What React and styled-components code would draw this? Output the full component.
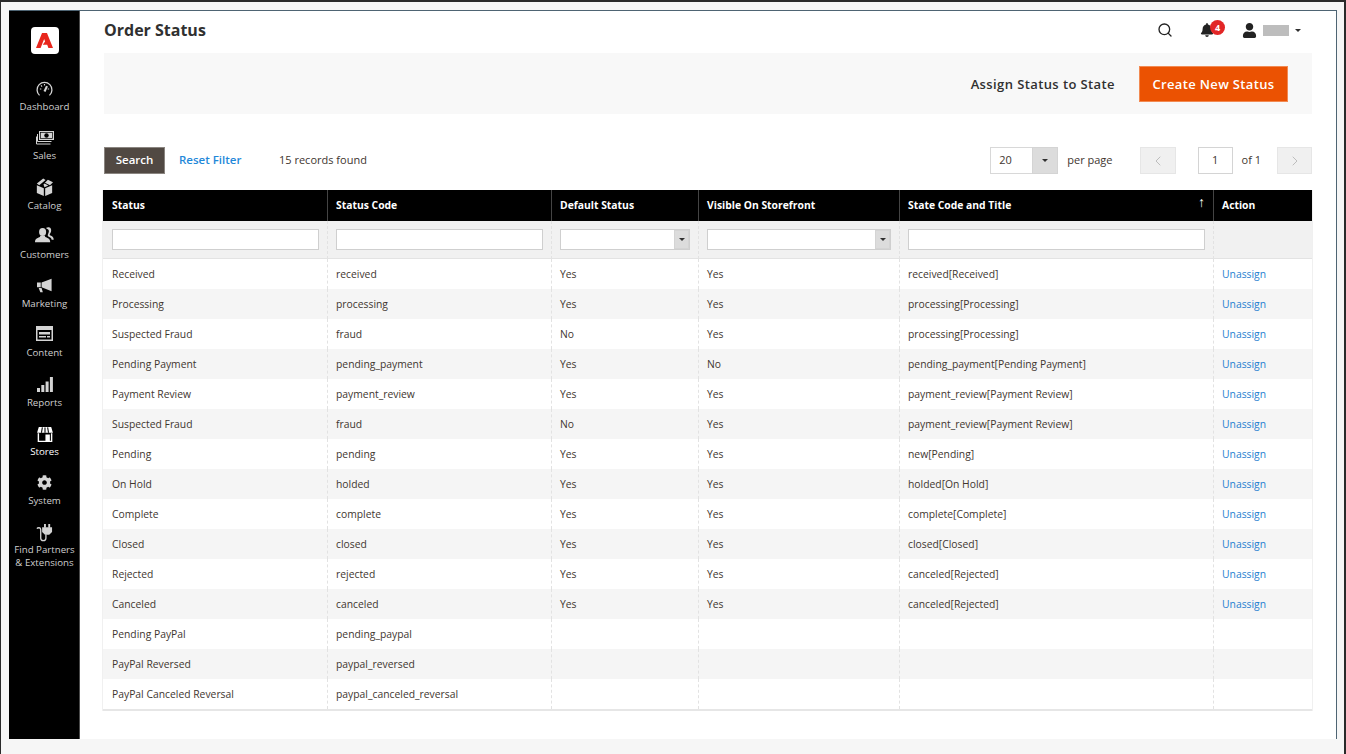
import React from "react";
import styled, { createGlobalStyle } from "styled-components";
import { Search as SearchIcon, ChevronLeft, ChevronRight } from "lucide-react";
import { FaBell, FaCog, FaUser } from "react-icons/fa";

const GlobalStyle = createGlobalStyle`
    html, body {
        margin: 0;
        padding: 0;
        height: 754px;
        overflow: hidden;
        background: #f6f6f6;
        font-family: "Open Sans", "Liberation Sans", sans-serif;
        color: #41362f;
    }
    * {
        box-sizing: border-box;
    }
`;

const Screen = styled.div`
    width: 1346px;
    height: 754px;
    padding: 8px 7px 15px 8px;
    border-top: 2px solid #2a2a2a;
    border-left: 1px solid #2a2a2a;
    border-right: 2px solid #2a2a2a;
    background: #f6f6f6;
`;

const Window = styled.div`
    height: 100%;
    display: flex;
    background: #fff;
    border-top: 1px solid #4e6473;
    border-right: 1px solid #4e6473;
`;

const Sidebar = styled.nav`
    width: 71px;
    flex: none;
    background: #000;
    border-right: 1px solid #4a4a4a;
    display: flex;
    flex-direction: column;
    align-items: center;
    padding: 16px 0 0 1px;
`;

const LogoTile = styled.div`
    width: 28px;
    height: 27px;
    border-radius: 4px;
    background: #fff;
    display: flex;
    align-items: center;
    justify-content: center;
    margin-bottom: 24px;
`;

const NavList = styled.div`
    width: 100%;
    display: flex;
    flex-direction: column;
`;

const NavItem = styled.div`
    height: 49.3px;
    display: flex;
    flex-direction: column;
    align-items: center;
    color: ${p => (p.$active ? "#fff" : "#cfcfcf")};
    font-size: 9.7px;
    line-height: 13px;
    text-align: center;
    white-space: nowrap;
`;

const NavIcon = styled.div`
    height: ${p => p.$h || 22}px;
    padding-bottom: ${p => (p.$lift || 0) * 2}px;
    display: flex;
    align-items: center;
    justify-content: center;
    color: #d4d4d4;
`;

const Main = styled.main`
    flex: 1;
    min-width: 0;
    padding: 0 24px 0 24px;
`;

const TopBar = styled.header`
    height: 42px;
    display: flex;
    align-items: center;
    justify-content: space-between;
    padding-bottom: 4px;
`;

const Title = styled.h1`
    margin: 0;
    font-size: 16px;
    font-weight: 700;
    color: #303030;
`;

const TopActions = styled.div`
    display: flex;
    align-items: center;
    color: #222;
    padding-right: 11px;
`;

const BellWrap = styled.div`
    position: relative;
    width: 14px;
    height: 15px;
    margin: 0 28px 0 27px;
    display: flex;
`;

const Badge = styled.span`
    position: absolute;
    left: 10px;
    top: -3px;
    width: 15px;
    height: 15px;
    border-radius: 50%;
    background: #e22626;
    color: #fff;
    font-size: 9px;
    font-weight: 700;
    line-height: 15px;
    text-align: center;
`;

const UserName = styled.div`
    width: 26px;
    height: 11px;
    margin: 0 6px 0 6px;
    background: #bdbdbd;
`;

const Caret = styled.span`
    width: 0;
    height: 0;
    border-left: 3px solid transparent;
    border-right: 3px solid transparent;
    border-top: 3.5px solid ${p => p.$color || "#303030"};
`;

const ActionBar = styled.div`
    height: 61px;
    background: #f8f8f8;
    display: flex;
    align-items: center;
    justify-content: flex-end;
    padding-right: 24px;
    gap: 24px;
`;

const ActionLink = styled.span`
    font-size: 13px;
    font-weight: 600;
    letter-spacing: 0.4px;
    color: #303030;
`;

const PrimaryButton = styled.button`
    width: 149px;
    height: 36px;
    border: 1px solid #f28a52;
    background: #eb5202;
    color: #fff;
    font: 600 13px "Open Sans", sans-serif;
    letter-spacing: 0.35px;
    padding: 0;
`;

const GridBar = styled.div`
    height: 76px;
    padding-top: 33px;
    display: flex;
    align-items: flex-start;
    font-size: 11px;
`;

const SearchButton = styled.button`
    width: 61px;
    height: 27px;
    border: 1px solid #8a8580;
    background: #514943;
    color: #fff;
    font: 600 11.5px "Open Sans", sans-serif;
    padding: 0 0 2px;
`;

const ResetLink = styled.a`
    margin-left: 14px;
    line-height: 26px;
    width: 100px;
    font-size: 11.5px;
    font-weight: 600;
    color: #1f88d9;
`;

const Found = styled.span`
    line-height: 26px;
    color: #41362f;
`;

const Pager = styled.div`
    margin-left: auto;
    display: flex;
    align-items: center;
    height: 27px;
`;

const PerPageValue = styled.div`
    width: 42px;
    height: 27px;
    border: 1px solid #d8d8d8;
    border-right: 0;
    padding-left: 8px;
    line-height: 24px;
    background: #fff;
`;

const SelectArrow = styled.div`
    width: ${p => p.$w || 26}px;
    height: ${p => p.$h || 27}px;
    background: #dcdcdc;
    border: 1px solid #d4d4d4;
    display: flex;
    align-items: center;
    justify-content: center;
`;

const PerPageLabel = styled.span`
    margin: -2px 27px 0 9px;
`;

const PageButton = styled.div`
    width: ${p => p.$w}px;
    height: 27px;
    background: #f0f0f0;
    border: 1px solid #e6e6e6;
    color: #bdbdbd;
    display: flex;
    align-items: center;
    justify-content: center;
`;

const PageInput = styled.div`
    width: 35px;
    height: 27px;
    margin-left: 22px;
    border: 1px solid #d4d4d4;
    background: #fff;
    text-align: center;
    line-height: 24px;
`;

const OfLabel = styled.span`
    margin: -2px 16px 0 9px;
`;

const Table = styled.table`
    width: 1209px;
    margin-left: -1px;
    table-layout: fixed;
    border-collapse: separate;
    border-spacing: 0;
    font-size: 10.35px;
    border-bottom: 2px solid #e6e6e6;
    box-shadow: 1px 0 0 #f0f0f0, -1px 0 0 #f0f0f0;
`;

const HeadCell = styled.th`
    height: 31px;
    padding: 0 8px 2px;
    background: #000;
    color: #fff;
    font-size: 10.35px;
    font-weight: 700;
    text-align: left;
    border-left: 1px solid #444;
    position: relative;
    &:first-child {
        border-left: 0;
        padding-left: 9px;
    }
`;

const SortMark = styled.span`
    position: absolute;
    right: 8px;
    top: 2px;
    font-size: 14px;
    font-weight: 400;
`;

const FilterCell = styled.td`
    height: 38px;
    padding: 0 8px;
    background: #f1f1f1;
    border-left: 1px dashed #e2e2e2;
    border-bottom: 1px solid #e3e3e3;
    &:first-child {
        border-left: 0;
        padding-left: 9px;
    }
`;

const TextFilter = styled.div`
    height: 21px;
    background: #fff;
    border: 1px solid #cfcfcf;
    width: ${p => p.$width || "100%"};
`;

const SelectFilter = styled.div`
    height: 21px;
    background: #fff;
    border: 1px solid #cfcfcf;
    display: flex;
    justify-content: flex-end;
`;

const Row = styled.tr`
    background: ${p => (p.$odd ? "#f5f5f5" : "#fff")};
`;

const Cell = styled.td`
    height: 30px;
    padding: 0 8px;
    color: #41362f;
    white-space: nowrap;
    border-left: 1px dashed #e2e2e2;
    &:first-child {
        border-left: 0;
        padding-left: 9px;
    }
`;

const ActionLinkCell = styled.a`
    color: #1f7fd0;
`;

const navItems = [
    {
        label: "Dashboard",
        icon: (
            <svg width="17" height="16" viewBox="0 0 24 22" fill="none" stroke="currentColor">
                <path d="M5 20A10.500 10.500 0 1 1 19 20" strokeWidth="1.800" />
                <path d="M12 14.500L15.500 7" strokeWidth="3" />
                <path d="M12 4v2M5.500 11h2M18.500 11h-2M7.200 6l1.300 1.500" strokeWidth="1.600" />
            </svg>
        ),
    },
    {
        label: "Sales",
        icon: (
            <svg width="18" height="16" viewBox="0 0 18 16" fill="none">
                <rect x="3" y="1" width="15" height="9" fill="currentColor" />
                <circle cx="10.500" cy="5.500" r="2.200" fill="#000" />
                <rect x="4.500" y="2.500" width="12" height="6" fill="none" stroke="#000" strokeWidth="0.700" />
                <path d="M1.500 4v7.500h14M0.500 6.500v7.500h14" stroke="currentColor" strokeWidth="1" />
            </svg>
        ),
    },
    {
        label: "Catalog",
        lift: 1,
        icon: (
            <svg width="17" height="18" viewBox="0 0 20 21" fill="currentColor">
                <path d="M1 8.500l8.200 3.500v9L1 17.500zM19 8.500l-8.200 3.500v9l8.200-3.500z" />
                <path d="M1 6.500L8.500.500l2.700 1.800L3.800 8.500zM10.500 5.500l3.500-3.500 6 3-3.500 3.500zM8.800 7.500l1.200-1 4.500 2.300-4.500 2z" />
            </svg>
        ),
    },
    {
        label: "Customers",
        lift: 2,
        icon: (
            <svg width="19" height="16" viewBox="0 0 20 19" fill="currentColor" preserveAspectRatio="none">
                <path d="M11.500 1.200c1-.9 2.200-1.200 3.200-.9 2 .5 2.700 2.800 2.200 5-.3 1.400-.9 2.500-1.400 3.200-.2.900.5 1.500 1.500 2 1.200.6 2.600 1.500 2.700 4.500h-2.200c-.3-2-1.500-2.800-3-3.500-1.200-.6-1.300-1.900-.7-3.300.6-1.300 1-2.800.7-3.900-.2-1-.8-1.700-1.600-1.900z" />
                <ellipse cx="8" cy="6" rx="3.700" ry="4.800" />
                <path d="M0 18c0-4 2.500-4.800 4.500-5.800.8-.4 1-1 1-1.800h5c0 .8.200 1.400 1 1.800 2 1 4.500 1.800 4.500 5.800z" />
            </svg>
        ),
    },
    {
        label: "Marketing",
        lift: 1,
        icon: (
            <svg width="15" height="15" viewBox="0 0 18 17" fill="currentColor">
                <path d="M0 5h4.500v5.500H0zM5.500 5L17.500.500v15L5.500 10.500zM2 11.500h3.500l1.500 5H4z" />
            </svg>
        ),
    },
    {
        label: "Content",
        lift: 2,
        icon: (
            <svg width="17" height="15" viewBox="0 0 17 15">
                <path fillRule="evenodd" fill="currentColor" d="M0 0h17v15H0zM1.500 4v9.500h14V4zM3 6h11v2.500H3zM3 10h7v1.500H3zM11 10h3v1.500h-3z" />
            </svg>
        ),
    },
    {
        label: "Reports",
        icon: (
            <svg width="16" height="15" viewBox="0 0 16 15" fill="currentColor">
                <rect x="0" y="11" width="3" height="4" />
                <rect x="4.300" y="8" width="3" height="7" />
                <rect x="8.600" y="4.500" width="3" height="10.500" />
                <rect x="12.900" y="0" width="3" height="15" />
            </svg>
        ),
    },
    {
        label: "Stores",
        active: true,
        icon: (
            <svg width="16" height="15" viewBox="0 0 18 17" fill="none">
                <path d="M2 0h14l2 6.500H0z" fill="#fff" />
                <path d="M6 .500L5 6.500M9 .500v6M12 .500l1 6" stroke="#000" strokeWidth="1.200" />
                <path d="M1.500 7v9.500h15V7" stroke="#fff" strokeWidth="1.600" />
                <rect x="9.500" y="8.500" width="5" height="8" fill="#fff" />
            </svg>
        ),
    },
    { label: "System", lift: 1, icon: <FaCog size={15} /> },
    {
        label: "Find Partners\n& Extensions",
        h: 21,
        icon: (
            <svg width="17" height="19" viewBox="0 0 18 20" fill="none">
                <path d="M9.500 1v4M14 1v4" stroke="currentColor" strokeWidth="2" />
                <path d="M6.500 4.500h10.500v5l-3 3h-4.500l-3-3z" fill="currentColor" />
                <path d="M10.500 12v4c0 3.500-5.500 3.500-5.500 0V7C5 4.500 2 4.500 1 6" stroke="currentColor" strokeWidth="1.400" />
            </svg>
        ),
    },
];

const columns = [
    { title: "Status", width: 224 },
    { title: "Status Code", width: 224 },
    { title: "Default Status", width: 147 },
    { title: "Visible On Storefront", width: 201 },
    { title: "State Code and Title", width: 314, sorted: true },
    { title: "Action", width: 99 },
];

const rows = [
    ["Received", "received", "Yes", "Yes", "received[Received]"],
    ["Processing", "processing", "Yes", "Yes", "processing[Processing]"],
    ["Suspected Fraud", "fraud", "No", "Yes", "processing[Processing]"],
    ["Pending Payment", "pending_payment", "Yes", "No", "pending_payment[Pending Payment]"],
    ["Payment Review", "payment_review", "Yes", "Yes", "payment_review[Payment Review]"],
    ["Suspected Fraud", "fraud", "No", "Yes", "payment_review[Payment Review]"],
    ["Pending", "pending", "Yes", "Yes", "new[Pending]"],
    ["On Hold", "holded", "Yes", "Yes", "holded[On Hold]"],
    ["Complete", "complete", "Yes", "Yes", "complete[Complete]"],
    ["Closed", "closed", "Yes", "Yes", "closed[Closed]"],
    ["Rejected", "rejected", "Yes", "Yes", "canceled[Rejected]"],
    ["Canceled", "canceled", "Yes", "Yes", "canceled[Rejected]"],
    ["Pending PayPal", "pending_paypal"],
    ["PayPal Reversed", "paypal_reversed"],
    ["PayPal Canceled Reversal", "paypal_canceled_reversal"],
];

const App = () => {
    return (
        <Screen>
            <GlobalStyle />
            <Window>
                <Sidebar>
                    <LogoTile>
                        <svg width="17" height="15" viewBox="0 0 24 21" fill="#e8261c">
                            <path d="M8.500 0h7L24 21h-6.500l-1.700-4.500H9.500L12.800 12 11.500 8.500 6.500 21H0z" />
                        </svg>
                    </LogoTile>
                    <NavList>
                        {navItems.map(item => (
                            <NavItem key={item.label} $active={item.active}>
                                <NavIcon $lift={item.lift} $h={item.h}>{item.icon}</NavIcon>
                                {item.label.split("\n").map(line => (
                                    <div key={line}>{line}</div>
                                ))}
                            </NavItem>
                        ))}
                    </NavList>
                </Sidebar>
                <Main>
                    <TopBar>
                        <Title>Order Status</Title>
                        <TopActions>
                            <SearchIcon size={16} strokeWidth={2} />
                            <BellWrap>
                                <FaBell size={14} />
                                <Badge>4</Badge>
                            </BellWrap>
                            <FaUser size={15} />
                            <UserName />
                            <Caret />
                        </TopActions>
                    </TopBar>
                    <ActionBar>
                        <ActionLink>Assign Status to State</ActionLink>
                        <PrimaryButton>Create New Status</PrimaryButton>
                    </ActionBar>
                    <GridBar>
                        <SearchButton>Search</SearchButton>
                        <ResetLink>Reset Filter</ResetLink>
                        <Found>15 records found</Found>
                        <Pager>
                            <PerPageValue>20</PerPageValue>
                            <SelectArrow>
                                <Caret />
                            </SelectArrow>
                            <PerPageLabel>per page</PerPageLabel>
                            <PageButton $w={36}>
                                <ChevronLeft size={16} strokeWidth={1.500} />
                            </PageButton>
                            <PageInput>1</PageInput>
                            <OfLabel>of 1</OfLabel>
                            <PageButton $w={35}>
                                <ChevronRight size={16} strokeWidth={1.500} />
                            </PageButton>
                        </Pager>
                    </GridBar>
                    <Table>
                        <colgroup>
                            {columns.map(col => (
                                <col key={col.title} width={col.width} />
                            ))}
                        </colgroup>
                        <thead>
                            <tr>
                                {columns.map(col => (
                                    <HeadCell key={col.title}>
                                        {col.title}
                                        {col.sorted && <SortMark>↑</SortMark>}
                                    </HeadCell>
                                ))}
                            </tr>
                        </thead>
                        <tbody>
                            <tr>
                                <FilterCell><TextFilter /></FilterCell>
                                <FilterCell><TextFilter /></FilterCell>
                                <FilterCell>
                                    <SelectFilter>
                                        <SelectArrow $w={15} $h={19}><Caret /></SelectArrow>
                                    </SelectFilter>
                                </FilterCell>
                                <FilterCell>
                                    <SelectFilter>
                                        <SelectArrow $w={15} $h={19}><Caret /></SelectArrow>
                                    </SelectFilter>
                                </FilterCell>
                                <FilterCell><TextFilter /></FilterCell>
                                <FilterCell />
                            </tr>
                            {rows.map((row, i) => (
                                <Row key={row[0] + i} $odd={i % 2 === 1}>
                                    <Cell>{row[0]}</Cell>
                                    <Cell>{row[1]}</Cell>
                                    <Cell>{row[2]}</Cell>
                                    <Cell>{row[3]}</Cell>
                                    <Cell>{row[4]}</Cell>
                                    <Cell>
                                        {row[2] && <ActionLinkCell>Unassign</ActionLinkCell>}
                                    </Cell>
                                </Row>
                            ))}
                        </tbody>
                    </Table>
                </Main>
            </Window>
        </Screen>
    );
};

export default App;
